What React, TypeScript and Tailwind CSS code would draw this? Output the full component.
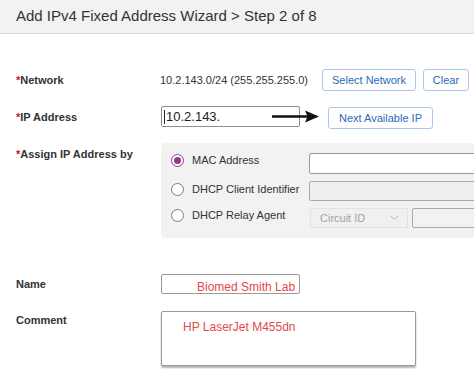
import React from 'react';

const Label = ({ text, required }: { text: string; required?: boolean }) => (
  <div className="w-[161px] shrink-0 pl-4 text-[11px] font-bold text-[#333] leading-[14px]">
    {required && <span className="text-[#c8102e]">*</span>}
    {text}
  </div>
);

const Radio = ({ checked }: { checked?: boolean }) =>
  checked ? (
    <span className="w-[13px] h-[13px] rounded-full border-[1.5px] border-[#8e3a8f] bg-white flex items-center justify-center shrink-0">
      <span className="w-[7px] h-[7px] rounded-full bg-[#8e3a8f]" />
    </span>
  ) : (
    <span className="w-[13px] h-[13px] rounded-full border border-[#7a7a7a] bg-white shrink-0" />
  );

const Arrow = () => (
  <svg className="absolute left-[272px] top-[3px]" width="48" height="15" viewBox="0 0 48 15">
    <line x1="0" y1="7.5" x2="38" y2="7.5" stroke="#111" strokeWidth="2.5" />
    <polygon points="33,1.5 47,7.5 33,13.5 35.5,7.5" fill="#111" />
  </svg>
);

export default function App() {
  return (
    <div className="w-[474px] h-[369px] overflow-hidden bg-white font-['Liberation_Sans',Arial,sans-serif] text-[#333]">
      {/* Wizard title */}
      <div className="h-[34px] bg-[#f2f2f2] border-b border-[#d9d9d9] pl-4 flex items-center text-[15px] text-[#333]">
        Add IPv4 Fixed Address Wizard &gt; Step 2 of 8
      </div>

      {/* Network */}
      <div className="mt-[35px] h-[22px] flex items-center">
        <Label text="Network" required />
        <span className="text-[11px] ml-[-1px]">10.2.143.0/24 (255.255.255.0)</span>
        <button className="ml-[14px] w-[94px] h-[22px] rounded-[3px] border border-[#a9c7ea] bg-white text-[11px] text-[#2a6ab8]">
          Select Network
        </button>
        <button className="ml-[7px] w-[46px] h-[22px] rounded-[3px] border border-[#a9c7ea] bg-white text-[11px] text-[#2a6ab8]">
          Clear
        </button>
      </div>

      {/* IP Address */}
      <div className="relative mt-[15px] h-[23px] flex items-start">
        <div className="h-[21px] flex items-center">
          <Label text="IP Address" required />
        </div>
        <div className="w-[139px] h-[21px] border border-[#8f8f8f] rounded-[2px] bg-white flex items-center pl-[2px] text-[13px] text-[#222]">
          <span className="w-px h-[14px] bg-[#222] mr-[1px]" />
          10.2.143.
        </div>
        <button className="ml-[28px] mt-px w-[105px] h-[22px] rounded-[3px] border border-[#a9c7ea] bg-white text-[11px] text-[#2a6ab8]">
          Next Available IP
        </button>
        <Arrow />
      </div>

      {/* Assign IP Address by */}
      <div className="mt-[14px] flex items-start">
        <div className="pt-[4px]">
          <Label text="Assign IP Address by" required />
        </div>
        <div className="w-[340px] shrink-0 bg-[#f2f2f2] rounded-[4px] pt-[10px] pb-[10px] flex flex-col gap-[7px] text-[11px]">
          <div className="h-[21px] flex items-start">
            <div className="w-[148px] shrink-0 h-[14px] pl-[10px] flex items-center gap-[8px]">
              <Radio checked />
              <span>MAC Address</span>
            </div>
            <div className="flex-1 h-[21px] border border-[#999] rounded-[2px] bg-white" />
          </div>
          <div className="h-[20px] flex items-start">
            <div className="w-[148px] shrink-0 h-[16px] pl-[10px] flex items-center gap-[8px]">
              <Radio />
              <span>DHCP Client Identifier</span>
            </div>
            <div className="flex-1 h-[20px] border border-[#aaa] rounded-[2px] bg-[#efefef]" />
          </div>
          <div className="h-[20px] flex items-start">
            <div className="w-[148px] shrink-0 h-[14px] pl-[10px] flex items-center gap-[8px]">
              <Radio />
              <span>DHCP Relay Agent</span>
            </div>
            <div className="ml-px w-[98px] h-[20px] border border-[#e2e2e2] bg-[#f0f0f0] flex items-center justify-between pl-[9px] pr-[8px] text-[#a3a3a3]">
              <span>Circuit ID</span>
              <svg width="9" height="6" viewBox="0 0 9 6">
                <polyline points="1,1 4.5,4.5 8,1" fill="none" stroke="#b5b5b5" strokeWidth="1" />
              </svg>
            </div>
            <div className="ml-[4px] flex-1 h-[20px] border border-[#aaa] rounded-[2px] bg-[#f2f2f2]" />
          </div>
        </div>
      </div>

      {/* Name */}
      <div className="mt-[36px] h-[20px] flex items-center">
        <Label text="Name" />
        <div className="w-[139px] h-[20px] border border-[#999] rounded-[2px] bg-white pl-[35px] pt-[5px] text-[12px] leading-[14px] text-[#e4474d]">
          Biomed Smith Lab
        </div>
      </div>

      {/* Comment */}
      <div className="mt-[17px] flex items-start">
        <div className="pt-[2px]">
          <Label text="Comment" />
        </div>
        <div className="w-[255px] h-[55px] border border-[#999] rounded-[2px] bg-white shadow-[0_2px_2px_rgba(0,0,0,0.3)] pl-[21px] pt-[8px] text-[12px] leading-[14px] text-[#e4474d]">
          HP LaserJet M455dn
        </div>
      </div>
    </div>
  );
}
